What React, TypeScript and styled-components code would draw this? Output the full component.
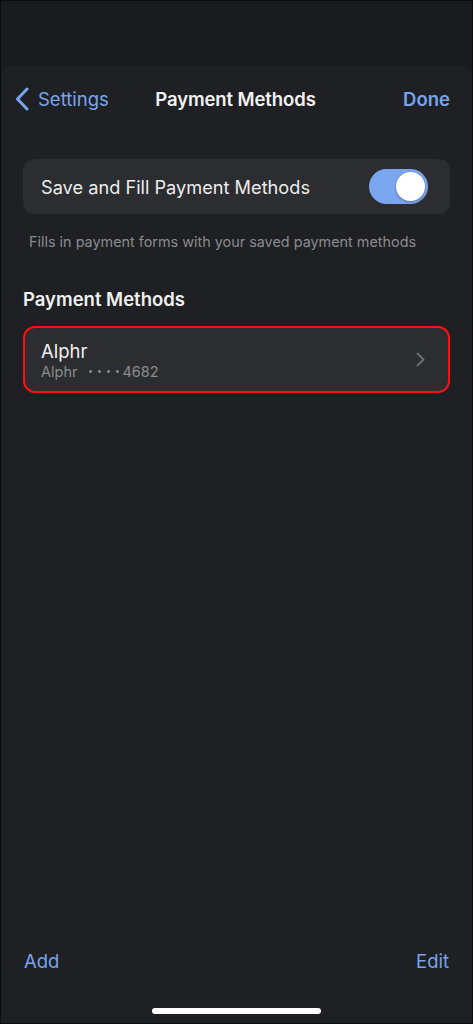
import React, { useState } from 'react';
import styled, { createGlobalStyle } from 'styled-components';

const GlobalStyle = createGlobalStyle`
  html, body {
    margin: 0;
    padding: 0;
    background: #111214;
  }
  * {
    box-sizing: border-box;
  }
`;

const Screen = styled.div`
  width: 473px;
  height: 1024px;
  display: flex;
  flex-direction: column;
  background: #1a1b1e;
  border: 1px solid #0c0c0d;
  font-family: Inter, 'Noto Sans', 'Liberation Sans', sans-serif;
  overflow: hidden;
`;

const StatusArea = styled.div`
  height: 65px;
  flex-shrink: 0;
`;

const Sheet = styled.div`
  flex: 1;
  display: flex;
  flex-direction: column;
  background: #1f2023;
  border-radius: 11px 11px 0 0;
  padding: 0 22px;
`;

const NavBar = styled.header`
  height: 66px;
  display: grid;
  grid-template-columns: 1fr auto 1fr;
  align-items: center;
  margin: 0 0 0 -8px;
`;

const BackButton = styled.button`
  display: flex;
  align-items: center;
  gap: 9px;
  background: none;
  border: none;
  padding: 0;
  color: #78a4ec;
  font-family: inherit;
  font-size: 18.5px;
  cursor: pointer;
  justify-self: start;
`;

const Title = styled.h1`
  margin: 0 0 0 6px;
  font-size: 18.5px;
  font-weight: 600;
  color: #f2f2f2;
  letter-spacing: -0.1px;
`;

const NavAction = styled.button`
  justify-self: end;
  background: none;
  border: none;
  padding: 0;
  color: #78a4ec;
  font-family: inherit;
  font-size: 18.5px;
  font-weight: 600;
  cursor: pointer;
`;

const Card = styled.div`
  margin-top: 27px;
  height: 55px;
  background: #2c2d30;
  border-radius: 11px;
  display: flex;
  align-items: center;
  justify-content: space-between;
  padding: 0 22px 0 18px;
`;

const RowLabel = styled.span`
  font-size: 18.2px;
  color: #ececec;
`;

const SwitchTrack = styled.button<{ $on: boolean }>`
  width: 59px;
  height: 35px;
  border-radius: 18px;
  border: none;
  padding: 3px;
  display: flex;
  justify-content: ${p => (p.$on ? 'flex-end' : 'flex-start')};
  background: ${p => (p.$on ? '#7aa5ef' : '#3a3b3f')};
  cursor: pointer;
`;

const SwitchKnob = styled.span`
  width: 29px;
  height: 29px;
  border-radius: 50%;
  background: #ffffff;
  box-shadow: 0 1px 3px rgba(0, 0, 0, 0.3);
`;

const Footnote = styled.p`
  margin: 19px 0 0 6px;
  font-size: 14.4px;
  color: #8a8b8f;
`;

const SectionTitle = styled.h2`
  margin: 38px 0 0 0;
  font-size: 18.5px;
  font-weight: 600;
  color: #f0f0f0;
`;

const MethodRow = styled.div`
  margin-top: 16px;
  height: 67px;
  border: 2px solid #ff1010;
  border-radius: 12px;
  background: #2c2d30;
  display: flex;
  align-items: center;
  justify-content: space-between;
  padding: 0 23px 0 16px;
  cursor: pointer;
`;

const MethodText = styled.div`
  display: flex;
  flex-direction: column;
  gap: 1px;
`;

const MethodName = styled.span`
  font-size: 18.5px;
  color: #f0f0f0;
`;

const MethodDetail = styled.span`
  font-size: 14.5px;
  color: #8a8b8f;
  display: flex;
  align-items: center;
`;

const Dots = styled.span`
  display: flex;
  gap: 6px;
  margin: 1px 3px 0 12px;
`;

const Dot = styled.span`
  width: 3px;
  height: 3px;
  border-radius: 50%;
  background: #8a8b8f;
`;

const Spacer = styled.div`
  flex: 1;
`;

const Toolbar = styled.footer`
  display: flex;
  justify-content: space-between;
  align-items: center;
  padding: 0 1px;
  height: 30px;
`;

const ToolbarButton = styled.button`
  background: none;
  border: none;
  padding: 0;
  color: #78a4ec;
  font-family: inherit;
  font-size: 18.5px;
  cursor: pointer;
`;

const HomeArea = styled.div`
  height: 47px;
  display: flex;
  justify-content: center;
  align-items: flex-end;
  padding-bottom: 9px;
`;

const HomeIndicator = styled.div`
  width: 169px;
  height: 6px;
  border-radius: 3px;
  background: #ffffff;
`;

const ChevronLeft = () => (
  <svg width="14" height="24" viewBox="0 0 14 24" fill="none">
    <path d="M12 2 L2.5 12 L12 22" stroke="#78a4ec" strokeWidth="3" strokeLinecap="round" strokeLinejoin="round" />
  </svg>
);

const ChevronRight = () => (
  <svg width="9" height="15" viewBox="0 0 9 15" fill="none">
    <path d="M1.5 1.5 L7.5 7.5 L1.5 13.5" stroke="#6b6c70" strokeWidth="2" strokeLinecap="round" strokeLinejoin="round" />
  </svg>
);

export default function App() {
  const [saveFill, setSaveFill] = useState(true);

  return (
    <>
      <GlobalStyle />
      <Screen>
        <StatusArea />
        <Sheet>
          <NavBar>
            <BackButton>
              <ChevronLeft />
              Settings
            </BackButton>
            <Title>Payment Methods</Title>
            <NavAction>Done</NavAction>
          </NavBar>

          <Card>
            <RowLabel>Save and Fill Payment Methods</RowLabel>
            <SwitchTrack $on={saveFill} onClick={() => setSaveFill(!saveFill)}>
              <SwitchKnob />
            </SwitchTrack>
          </Card>
          <Footnote>Fills in payment forms with your saved payment methods</Footnote>

          <SectionTitle>Payment Methods</SectionTitle>
          <MethodRow>
            <MethodText>
              <MethodName>Alphr</MethodName>
              <MethodDetail>
                Alphr
                <Dots>
                  {[0, 1, 2, 3].map(i => (
                    <Dot key={i} />
                  ))}
                </Dots>
                4682
              </MethodDetail>
            </MethodText>
            <ChevronRight />
          </MethodRow>

          <Spacer />
          <Toolbar>
            <ToolbarButton>Add</ToolbarButton>
            <ToolbarButton>Edit</ToolbarButton>
          </Toolbar>
          <HomeArea>
            <HomeIndicator />
          </HomeArea>
        </Sheet>
      </Screen>
    </>
  );
}
